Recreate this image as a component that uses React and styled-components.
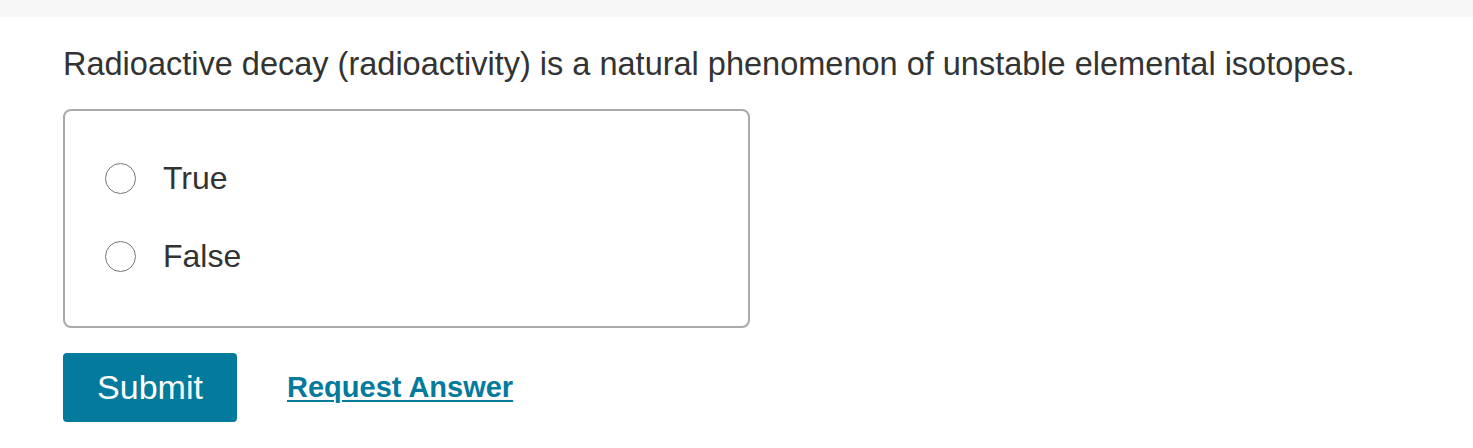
import styled, { createGlobalStyle } from 'styled-components';

const GlobalStyle = createGlobalStyle`
    body {
        margin: 0;
        background: #fff;
        font-family: "Liberation Sans", Arial, sans-serif;
        color: #333;
    }
`;

const TopBar = styled.div`
    height: 17px;
    background-color: #f7f7f7;
`;

const Content = styled.div`
    padding: 26px 0 0 63px;
`;

const Question = styled.p`
    margin: 0;
    font-size: 32.5px;
    line-height: 42px;
    color: #333;
`;

const Choices = styled.fieldset`
    margin: 24px 0 0;
    width: 687px;
    height: 219px;
    box-sizing: border-box;
    border: 2px solid #aaa;
    border-radius: 8px;
    padding: 48px 0 0 40px;
    display: flex;
    flex-direction: column;
    gap: 40px;
`;

const Choice = styled.label`
    display: flex;
    align-items: center;
    gap: 27px;
    font-size: 32px;
    line-height: 38px;
    color: #333;
    cursor: pointer;
`;

const Radio = styled.span`
    width: 31px;
    height: 31px;
    box-sizing: border-box;
    border: 1px solid #767676;
    border-radius: 50%;
    background: #fff;
    flex-shrink: 0;
`;

const Actions = styled.div`
    margin-top: 25px;
    display: flex;
    align-items: center;
    gap: 50px;
`;

const SubmitButton = styled.button`
    width: 174px;
    height: 69px;
    border: none;
    border-radius: 4px;
    background-color: #047a9c;
    color: #fff;
    font-family: inherit;
    font-size: 34px;
    cursor: pointer;
`;

const RequestLink = styled.a`
    color: #047a9c;
    font-size: 29px;
    font-weight: bold;
    text-decoration: underline;
    text-decoration-thickness: 2px;
    text-underline-offset: 3px;
    cursor: pointer;
`;

export default function App() {
    return (
        <>
            <GlobalStyle />
            <TopBar />
            <Content>
                <Question>Radioactive decay (radioactivity) is a natural phenomenon of unstable elemental isotopes.</Question>
                <Choices>
                    <Choice><Radio />True</Choice>
                    <Choice><Radio />False</Choice>
                </Choices>
                <Actions>
                    <SubmitButton>Submit</SubmitButton>
                    <RequestLink>Request Answer</RequestLink>
                </Actions>
            </Content>
        </>
    );
}
